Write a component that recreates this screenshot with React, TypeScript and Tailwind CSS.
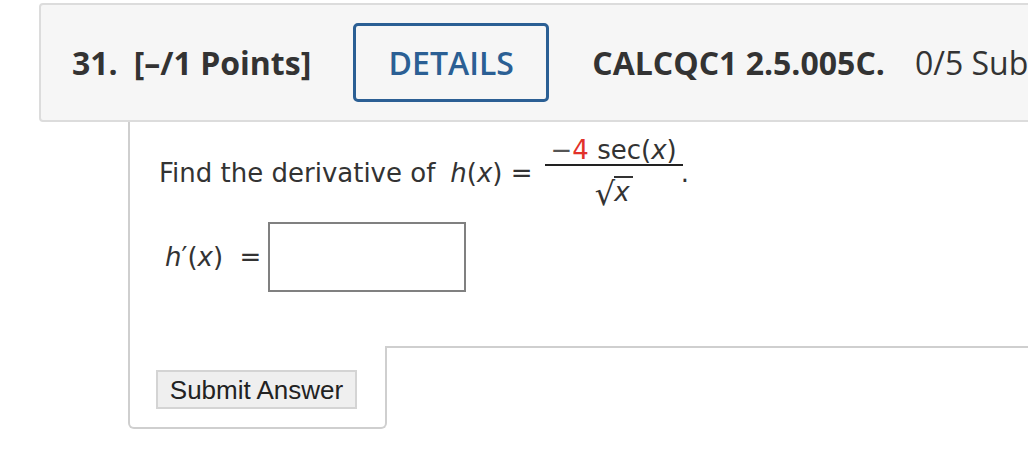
import React from 'react';

const header = { fontFamily: '"Open Sans", "Liberation Sans", sans-serif' };
const body = { fontFamily: '"DejaVu Sans", Verdana, sans-serif' };
const arial = { fontFamily: '"Liberation Sans", Arial, sans-serif' };

function Fraction() {
  return (
    <span className="ml-[12px] inline-flex flex-col items-center">
      <span className="px-[6px] text-[26px] leading-[25px] text-[#333]">
        <span className="text-[#555]">−</span>
        <span className="text-[#e2312a]">4</span> sec(<i>x</i>)
      </span>
      <span className="mt-[1px] h-[2px] w-full bg-[#222]" />
      <span className="mt-[9px] flex h-[34px] items-start text-[26px] text-[#333]">
        <span className="text-[32px] leading-[38px]">√</span>
        <i className="-ml-[1px] mt-[1px] border-t-2 border-[#333] pr-[3px] leading-[28px]">x</i>
      </span>
    </span>
  );
}

export default function App() {
  return (
    <div className="h-[450px] w-[1028px] overflow-hidden bg-white pl-[39px] pt-[3px]">
      <div
        className="flex h-[119px] w-[1100px] items-center rounded-[4px] border-2 border-[#dcdcdc] bg-[#f6f6f6] pl-[31px] text-[32px] text-[#333]"
        style={header}
      >
        <span className="font-bold">31.</span>
        <span className="ml-[16px] font-bold">[–/1 Points]</span>
        <div className="ml-[42px] flex h-[79px] w-[196px] shrink-0 items-center justify-center rounded-[5px] border-[3px] border-[#2b5f94] font-semibold text-[#2b5f94]">
          DETAILS
        </div>
        <span className="ml-[43px] font-bold">CALCQC1 2.5.005C.</span>
        <span className="ml-[30px] whitespace-nowrap">0/5 Sub</span>
      </div>

      <div className="ml-[89px] flex w-[900px] flex-col" style={body}>
        <div className="border-l-2 border-[#cfcfcf] pl-[29px] pt-[16px] text-[26px] text-[#333]">
          <div className="flex items-center">
            <span>Find the derivative of</span>
            <span className="ml-[15px]">
              <i>h</i>(<i>x</i>) =
            </span>
            <Fraction />
            <span className="-ml-[2px]">.</span>
          </div>
          <div className="mt-[13px] flex h-[70px] items-center pl-[6px]">
            <span>
              <i>h</i>′(<i>x</i>)&nbsp; =
            </span>
            <div className="ml-[7px] h-[70px] w-[198px] border-2 border-[#808080] bg-white" />
          </div>
          <div className="h-[54px]" />
        </div>
        <div className="flex">
          <div className="h-[83px] w-[259px] rounded-b-[6px] border-x-2 border-b-2 border-[#cfcfcf] pl-[26px] pt-[24px]">
            <button
              className="h-[39px] w-[201px] border-2 border-[#d4d4d4] bg-[#efefef] text-[26px] leading-none text-[#222]"
              style={arial}
            >
              Submit Answer
            </button>
          </div>
          <div className="flex-1 border-t-2 border-[#cfcfcf]" />
        </div>
      </div>
    </div>
  );
}
